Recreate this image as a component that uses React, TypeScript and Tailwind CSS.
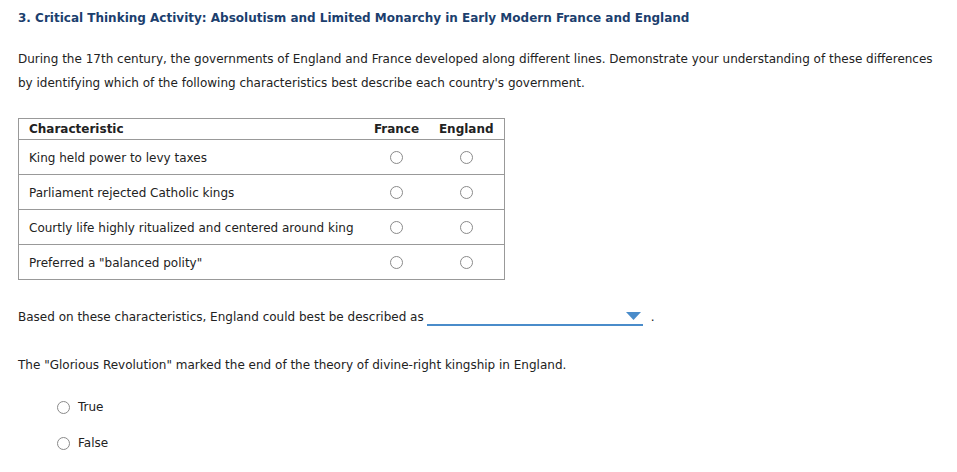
const rows = [
  "King held power to levy taxes",
  "Parliament rejected Catholic kings",
  "Courtly life highly ritualized and centered around king",
  'Preferred a "balanced polity"',
];

function Radio() {
  return <span className="inline-block w-[13px] h-[13px] rounded-full border border-[#8a8a8a] bg-white" />;
}

export default function App() {
  return (
    <div className="min-h-screen bg-white text-[#222] text-[12px] font-['DejaVu_Sans',sans-serif] pl-[18px] pt-[10px]">
      <h1 className="font-bold text-[#1c3f6e] leading-[17px]">
        3. Critical Thinking Activity: Absolutism and Limited Monarchy in Early Modern France and England
      </h1>

      <p className="mt-[20px] leading-[24px] whitespace-nowrap">
        During the 17th century, the governments of England and France developed along different lines. Demonstrate your understanding of these differences
        <br />
        by identifying which of the following characteristics best describe each country's government.
      </p>

      <table className="mt-[23px] w-[487px] border border-[#999] border-collapse table-fixed">
        <colgroup>
          <col />
          <col className="w-[70px]" />
          <col className="w-[73px]" />
        </colgroup>
        <thead>
          <tr className="h-[21px]">
            <th className="text-left font-bold pl-[10px] py-0">Characteristic</th>
            <th className="font-bold px-0">France</th>
            <th className="font-bold px-0 pr-[3px]">England</th>
          </tr>
        </thead>
        <tbody>
          {rows.map((r) => (
            <tr key={r} className="h-[35px] border-t border-[#999]">
              <td className="pl-[10px] pt-[1px] whitespace-nowrap">{r}</td>
              <td className="align-middle">
                <div className="flex justify-center"><Radio /></div>
              </td>
              <td className="align-middle pr-[3px]">
                <div className="flex justify-center"><Radio /></div>
              </td>
            </tr>
          ))}
        </tbody>
      </table>

      <div className="mt-[27px] flex items-end">
        <span className="leading-[17px]">Based on these characteristics, England could best be described as</span>
        <div className="ml-[3px] w-[216px] h-[19px] border-b-2 border-[#4a8cca] flex items-center justify-end pr-[2px]">
          <svg width="15" height="8" viewBox="0 0 15 8">
            <polygon points="0,0 15,0 7.5,8" fill="#4a8cca" />
          </svg>
        </div>
        <span className="ml-[8px] leading-[17px]">.</span>
      </div>

      <p className="mt-[31px] leading-[17px]">
        The "Glorious Revolution" marked the end of the theory of divine-right kingship in England.
      </p>

      <div className="mt-[25px] pl-[39px] flex flex-col gap-[19px]">
        <label className="flex items-center gap-[8px] leading-[17px]">
          <Radio />
          <span>True</span>
        </label>
        <label className="flex items-center gap-[8px] leading-[17px]">
          <Radio />
          <span>False</span>
        </label>
      </div>
    </div>
  );
}
